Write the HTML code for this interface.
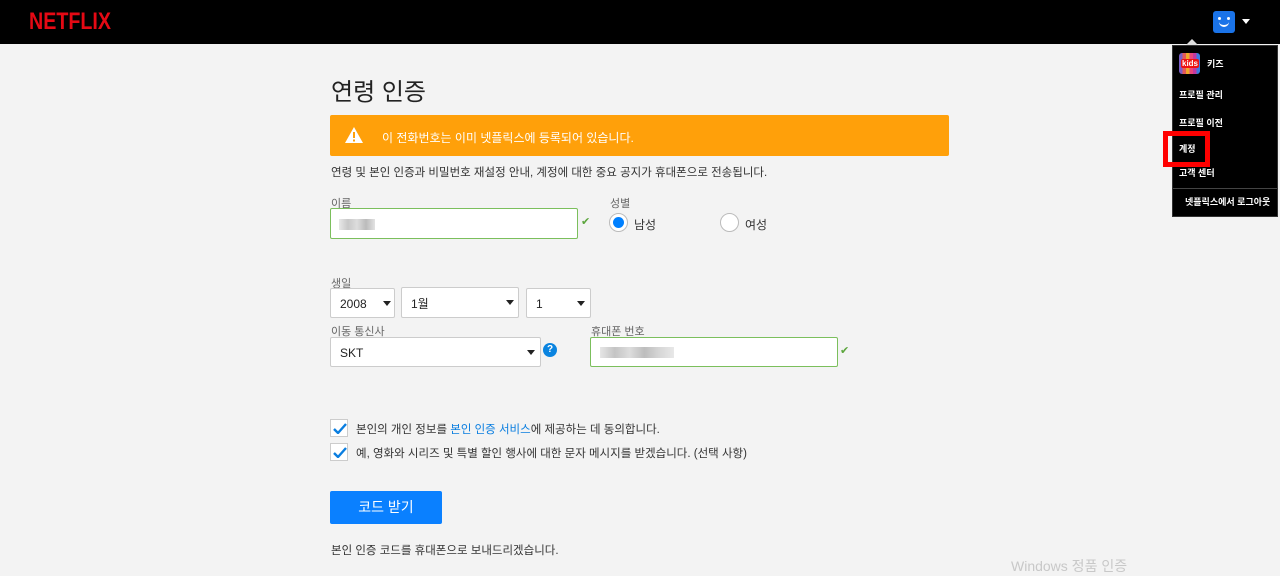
<!DOCTYPE html>
<html><head><meta charset="utf-8"><style>
*{box-sizing:border-box;margin:0;padding:0}
body{width:1280px;height:571px;overflow:hidden;background:#f3f3f3;font-family:"Liberation Sans","Noto Sans CJK KR",sans-serif;color:#333;font-size:12px;position:relative}
.hdr{position:absolute;left:0;top:0;width:1280px;height:44px;background:#000}
.logo{position:absolute;left:29px;top:8px;color:#e50914;font-weight:bold;font-size:24px;transform:scaleX(0.82);transform-origin:left;font-family:"Liberation Sans Narrow","Liberation Sans",sans-serif}
.av{position:absolute;left:1213px;top:11px;width:22px;height:22px;background:#1a73e8;border-radius:3px}
.menu{position:absolute;left:1172px;top:45px;width:106px;height:172px;background:#000;border:1px solid #333;color:#fff;font-size:9px;font-weight:bold}
.menu div{position:absolute;left:6px}
.abs{position:absolute}
.lbl{position:absolute;font-size:11px;color:#666}
.inp{position:absolute;background:#fff;border:1px solid #ccc;border-radius:2px}
.sel{font-size:12px;color:#222}
.arr{position:absolute;width:0;height:0;border-left:4px solid transparent;border-right:4px solid transparent;border-top:5px solid #222}
.cb{position:absolute;width:18px;height:18px;background:#fff;border:1px solid #ccc}
</style></head><body>
<div class="hdr">
<div class="logo">NETFLIX</div>
<div class="av"><span class="abs" style="left:5px;top:6px;width:3px;height:3px;background:#fff;border-radius:50%"></span><span class="abs" style="left:14px;top:6px;width:3px;height:3px;background:#fff;border-radius:50%"></span><span class="abs" style="left:6px;top:11px;width:10px;height:5px;border-bottom:2px solid #fff;border-radius:0 0 6px 6px"></span></div>
<div class="arr" style="left:1242px;top:19px;border-top-color:#fff"></div>
</div>
<div class="abs" style="left:1186px;top:39px;width:0;height:0;border-left:6px solid transparent;border-right:6px solid transparent;border-bottom:6px solid #ddd"></div>
<div class="menu">
<div style="left:6px;top:7px;width:21px;height:21px;border-radius:3px;overflow:hidden;background:linear-gradient(90deg,#7b5fc7 0 17%,#e45a5a 17% 34%,#f0a92b 34% 50%,#e9487c 50% 67%,#c23aa0 67% 84%,#3d7be0 84%)"><span style="position:absolute;left:2px;top:6px;font-size:8px;color:#fff;background:#e11;border-radius:2px;padding:0 1px;line-height:9px">kids</span></div>
<div style="left:34px;top:11px">키즈</div>
<div style="top:42px">프로필 관리</div>
<div style="top:70px">프로필 이전</div>
<div style="top:96px">계정</div>
<div style="top:120px">고객 센터</div>
<div style="left:0;top:142px;width:104px;border-top:1px solid #444"></div>
<div style="left:12px;top:149px">넷플릭스에서 로그아웃</div>
</div>
<div class="abs" style="left:1163px;top:131px;width:47px;height:36px;border:5px solid #f00"></div>

<div class="abs" style="left:331px;top:72px;font-size:24px;color:#222">연령 인증</div>
<div class="abs" style="left:330px;top:115px;width:619px;height:41px;background:#ffa00a;border-radius:2px">
<svg class="abs" style="left:14px;top:11px" width="20" height="18" viewBox="0 0 20 18"><path d="M10 1L19 17H1Z" fill="#fff"/><rect x="9" y="6" width="2" height="6" fill="#ffa00a"/><rect x="9" y="13.5" width="2" height="2" fill="#ffa00a"/></svg>
<span class="abs" style="left:52px;top:14px;color:#fff;font-size:12px">이 전화번호는 이미 넷플릭스에 등록되어 있습니다.</span></div>
<div class="abs" style="left:331px;top:164px;font-size:11.5px;color:#333">연령 및 본인 인증과 비밀번호 재설정 안내, 계정에 대한 중요 공지가 휴대폰으로 전송됩니다.</div>

<div class="lbl" style="left:331px;top:195px">이름</div>
<div class="inp" style="left:330px;top:208px;width:248px;height:31px;border-color:#7bbf5c"><span class="abs" style="left:8px;top:10px;width:36px;height:11px;background:linear-gradient(90deg,#e8e8e8,#c8c8c8,#ddd,#bbb,#e2e2e2)"></span></div>
<div class="abs" style="left:581px;top:215px;color:#5ba53c;font-size:11px">✔</div>
<div class="lbl" style="left:610px;top:195px">성별</div>
<div class="abs" style="left:609px;top:213px;width:19px;height:19px;border-radius:50%;background:#fff;border:1px solid #bbb"><span class="abs" style="left:3px;top:3px;width:11px;height:11px;border-radius:50%;background:#0080ff"></span></div>
<div class="abs" style="left:634px;top:216px;font-size:12px">남성</div>
<div class="abs" style="left:720px;top:213px;width:19px;height:19px;border-radius:50%;background:#fff;border:1px solid #bbb"></div>
<div class="abs" style="left:745px;top:216px;font-size:12px">여성</div>

<div class="lbl" style="left:331px;top:275px">생일</div>
<div class="inp" style="left:330px;top:288px;width:65px;height:30px"><span class="abs sel" style="left:9px;top:8px">2008</span><span class="arr" style="left:52px;top:12px"></span></div>
<div class="inp" style="left:401px;top:287px;width:118px;height:31px"><span class="abs sel" style="left:9px;top:7px">1월</span><span class="arr" style="left:104px;top:12px"></span></div>
<div class="inp" style="left:526px;top:288px;width:65px;height:30px"><span class="abs sel" style="left:9px;top:8px">1</span><span class="arr" style="left:50px;top:12px"></span></div>
<div class="lbl" style="left:331px;top:323px">이동 통신사</div>
<div class="inp" style="left:330px;top:337px;width:211px;height:30px"><span class="abs sel" style="left:9px;top:8px">SKT</span><span class="arr" style="left:196px;top:12px"></span></div>
<div class="abs" style="left:543px;top:343px;width:14px;height:14px;border-radius:50%;background:#0a84e0;color:#fff;font-size:10px;font-weight:bold;text-align:center;line-height:14px">?</div>
<div class="lbl" style="left:591px;top:323px">휴대폰 번호</div>
<div class="inp" style="left:590px;top:337px;width:248px;height:30px;border-color:#7bbf5c"><span class="abs" style="left:9px;top:9px;width:74px;height:11px;background:linear-gradient(90deg,#e6e6e6,#c4c4c4,#ddd,#bdbdbd,#d6d6d6,#e8e8e8)"></span></div>
<div class="abs" style="left:840px;top:344px;color:#5ba53c;font-size:11px">✔</div>

<div class="cb" style="left:330px;top:419px"><svg class="abs" style="left:2px;top:3px" width="14" height="11"><path d="M1 6L5 10L13 1" stroke="#0a7ee0" stroke-width="2.4" fill="none"/></svg></div>
<div class="abs" style="left:356px;top:421px;font-size:11.5px">본인의 개인 정보를 <span style="color:#0a7ee0">본인 인증 서비스</span>에 제공하는 데 동의합니다.</div>
<div class="cb" style="left:330px;top:443px"><svg class="abs" style="left:2px;top:3px" width="14" height="11"><path d="M1 6L5 10L13 1" stroke="#0a7ee0" stroke-width="2.4" fill="none"/></svg></div>
<div class="abs" style="left:356px;top:445px;font-size:11.5px">예, 영화와 시리즈 및 특별 할인 행사에 대한 문자 메시지를 받겠습니다. (선택 사항)</div>

<div class="abs" style="left:330px;top:491px;width:112px;height:33px;background:#0a80ff;border-radius:2px;color:#fff;font-size:14px;text-align:center;line-height:33px">코드 받기</div>
<div class="abs" style="left:331px;top:542px;font-size:11.5px">본인 인증 코드를 휴대폰으로 보내드리겠습니다.</div>
<div class="abs" style="left:1011px;top:556px;font-size:14px;color:#c8c8c8">Windows 정품 인증</div>
</body></html>
